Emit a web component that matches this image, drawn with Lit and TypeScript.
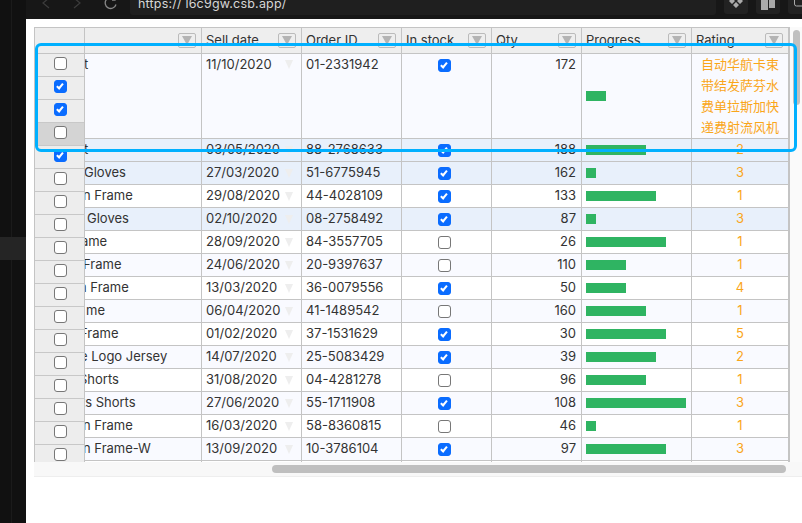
import { LitElement, html, css } from "lit";
import { customElement } from "lit/decorators.js";

interface Row { name: string; x: number; date: string; id: string; stock: boolean; qty: number; bar: number; rate: string; bg: string; tall?: boolean }
const W = "w", T = "t", B = "b";
const raw: [string, number, string, string, boolean, number, number, string, string][] = [
  ["t", 49, "11/10/2020", "01-2331942", true, 172, 20, "自动华航卡束带结发萨芬水费单拉斯加快递费射流风机", T],
  ["t", 49, "03/05/2020", "88-2768633", true, 188, 60, "2", B],
  ["Gloves", 49, "27/03/2020", "51-6775945", true, 162, 10, "3", B],
  ["n Frame", 48, "29/08/2020", "44-4028109", true, 133, 70, "1", W],
  ["Gloves", 52, "02/10/2020", "08-2758492", true, 87, 10, "3", B],
  ["rame", 41, "28/09/2020", "84-3557705", false, 26, 80, "1", W],
  ["Frame", 48, "24/06/2020", "20-9397637", false, 110, 40, "1", T],
  ["n Frame", 44, "13/03/2020", "36-0079556", true, 50, 40, "4", W],
  ["me", 51, "06/04/2020", "41-1489542", false, 160, 60, "1", T],
  ["Frame", 45, "01/02/2020", "37-1531629", true, 30, 80, "5", W],
  ["e Logo Jersey", 45, "14/07/2020", "25-5083429", true, 39, 70, "2", T],
  ["Shorts", 44, "31/08/2020", "04-4281278", false, 96, 60, "1", W],
  ["ts Shorts", 46, "27/06/2020", "55-1711908", true, 108, 100, "3", T],
  ["n Frame", 48, "16/03/2020", "58-8360815", false, 46, 10, "1", W],
  ["n Frame-W", 48, "13/09/2020", "10-3786104", true, 97, 80, "3", T],
];
const rows: Row[] = raw.map(([name, x, date, id, stock, qty, bar, rate, bg], i) => ({ name, x, date, id, stock, qty, bar, rate, bg, tall: i === 0 }));
const frozen = Array.from({ length: 18 }, (_, i) => i);
const heads = ["", "Sell date", "Order ID", "In stock", "Qty", "Progress", "Rating"];

@customElement("app-root")
export class AppRoot extends LitElement {
  static styles = css`
    :host { display: flex; width: 802px; height: 523px; overflow: hidden; background: #111; font-family: Inter, "Noto Sans CJK SC", sans-serif; font-size: 13px; color: #333; }
    .rail { width: 26px; flex: none; display: flex; flex-direction: column; background: #111; }
    .rail-line { flex: none; height: 237px; border-right: 1px solid #1b1b1b; width: 11px; }
    .rail-line.rest { flex: 1; }
    .rail-item { flex: none; height: 23px; background: #252525; }
    .main { flex: 1; display: flex; flex-direction: column; min-width: 0; }
    .top { height: 19px; flex: none; display: flex; align-items: flex-start; background: #171717; overflow: hidden; }
    .nav { width: 104px; flex: none; display: flex; align-items: center; gap: 23px; padding: 0 0 0 16px; box-sizing: border-box; margin-top: -6px; height: 18px; }
    .nav svg { flex: none; }
    .url { width: 586px; height: 15px; flex: none; background: #1f1f1f; border-radius: 0 0 3px 3px; color: #d6d6d6; font-size: 12.5px; line-height: 7px; padding-left: 8px; box-sizing: border-box; letter-spacing: 0.2px; white-space: nowrap; overflow: hidden; }
    .tools { display: flex; gap: 8px; padding-left: 8px; }
    .tool { width: 24px; height: 14px; background: #222; border-radius: 0 0 3px 3px; display: flex; justify-content: center; align-items: flex-start; }
    .page { flex: 1; background: #fff; position: relative; padding: 8px 0 0 8px; }
    .area { display: flex; flex-direction: column; width: 768px; }
    .grid { width: 756px; height: 435px; box-sizing: border-box; border: 1px solid #c4c4c4; border-bottom: 0; overflow: hidden; position: relative; }
    .row { display: grid; grid-template-columns: 167px 100px 100px 90px 90px 110px 97px; height: 23px; box-sizing: border-box; border-bottom: 1px solid #c4c4c4; }
    .row.tall { height: 85px; }
    .head { height: 26px; background: #eee; }
    .w { background: #fff; } .t { background: #f9faff; } .b { background: #e8f0fb; }
    .cell { border-right: 1px solid #c4c4c4; padding: 0 5px 0 4px; display: flex; align-items: center; white-space: nowrap; overflow: hidden; height: 22px; box-sizing: border-box; line-height: 20px; }
    .txt { padding-bottom: 2px; }
    .row.tall .cell { height: 84px; align-items: flex-start; line-height: 21px; padding-bottom: 0; }
    .row.head .cell { height: 25px; justify-content: space-between; line-height: 23px; }
    .name { padding-left: 0; }
    .date { justify-content: space-between; }
    .date i { width: 0; height: 0; border: 4px solid transparent; border-top: 9px solid #eee; border-bottom: 0; margin-right: 3px; margin-top: 2px; }
    .row.tall .date i { margin-top: 6px; }
    .stock { justify-content: center; padding: 0 5px 0 0; }
    .stock input { margin-top: 1px; }
    .row.tall .stock { padding-top: 5px; }
    .row.tall .stock input { margin-top: 0; }
    .qty { justify-content: flex-end; }
    .row.tall .prog { align-items: center; }
    .bar { height: 10px; background: #2fb462; }
    .rate { justify-content: center; color: #faa61a; text-align: center; white-space: normal; padding-left: 5px; }
    .row.tall .rate { padding: 0 9px; }
    .fbtn { width: 16px; height: 13px; flex: none; border: 1px solid #bbb; border-radius: 2px; background: #eee; display: flex; justify-content: center; align-items: center; }
    .fbtn b { width: 0; height: 0; border: 5px solid transparent; border-top: 9px solid #b4b4b4; border-bottom: 0; }
    input { appearance: none; -webkit-appearance: none; box-sizing: border-box; margin: 0; width: 13px; height: 13px; flex: none; background: #fff; border: 1px solid #777; border-radius: 3px; position: relative; }
    input:checked { background: #0a6cff; border-color: #0a6cff; }
    input:checked::after { content: ""; position: absolute; left: 3px; top: 0.5px; width: 3.5px; height: 7px; box-sizing: border-box; border: solid #fff; border-width: 0 2px 2px 0; transform: rotate(40deg); }
    .frozen { position: absolute; left: 0; top: 0; width: 49px; height: 100%; background: #ededed; border-right: 1px solid #c4c4c4; }
    .f-head { height: 25px; border-bottom: 1px solid #c4c4c4; }
    .f-row { border-bottom: 1px solid #c8c8c8; display: flex; align-items: flex-start; padding: 3px 0 0 19px; box-sizing: content-box; height: 19px; }
    .f-row.on { background: #d4d4d4; }
    .hbar { height: 15px; width: 768px; background: #f8f8f8; border-bottom: 1px solid #eee; display: flex; align-items: center; justify-content: flex-end; padding-right: 16px; box-sizing: border-box; }
    .hthumb { width: 514px; height: 8px; background: #bfbfbf; border-radius: 4px; }
    .vbar { position: absolute; right: 0; top: 8px; width: 12px; height: 435px; background: #fafafa; }
    .vthumb { position: absolute; left: 3px; top: 3px; width: 7px; height: 75px; background: #c0c0c0; border-radius: 4px; }
    .sel { position: absolute; left: 9px; top: 24px; width: 762px; height: 109px; box-sizing: border-box; border: 3px solid #00b0ff; border-radius: 6px; pointer-events: none; }
  `;

  render() {
    return html`
      <div class="rail">
        <div class="rail-line"></div>
        <div class="rail-item"></div>
        <div class="rail-line rest"></div>
      </div>
      <div class="main">
        <div class="top">
          <div class="nav">
            <svg width="8" height="12" viewBox="0 0 8 12" fill="none" stroke="#3c3c3c" stroke-width="1.2"><path d="M7 1 1 6l6 5"/></svg>
            <svg width="8" height="12" viewBox="0 0 8 12" fill="none" stroke="#3c3c3c" stroke-width="1.2"><path d="M1 1l6 5-6 5"/></svg>
            <svg width="14" height="14" viewBox="0 0 14 14" fill="none" stroke="#888" stroke-width="1.3"><path d="M12 8.5A5.5 5.5 0 1 1 11 3.5M11 1v3H8"/></svg>
          </div>
          <div class="url">https:// l6c9gw.csb.app/</div>
          <div class="tools">
            <div class="tool"><svg width="16" height="10" viewBox="0 0 16 10" fill="#aaa"><path d="M4 -2l3 3-3 3-3-3zM12 -2l3 3-3 3-3-3zM8 2l3 3-3 3-3-3z"/></svg></div>
            <div class="tool"><svg width="16" height="10" viewBox="0 0 16 10" fill="#aaa"><path d="M1 0h7v10H1zM9 0h6v8H9z"/></svg></div>
            <div class="tool"><svg width="16" height="10" viewBox="0 0 16 10" fill="none" stroke="#aaa"><rect x="2.5" y="-3" width="12" height="9" rx="2"/></svg></div>
          </div>
        </div>
        <div class="page">
          <div class="area">
            <div class="grid">
              <div class="row head">
                ${heads.map((h) => html`<div class="cell"><span>${h}</span><span class="fbtn"><b></b></span></div>`)}
              </div>
              ${rows.map((r) => html`
                <div class="row ${r.bg} ${r.tall ? "tall" : ""}">
                  <div class="cell name txt"><span style="padding-left:${r.x}px">${r.name}</span></div>
                  <div class="cell date txt"><span>${r.date}</span><i></i></div>
                  <div class="cell txt">${r.id}</div>
                  <div class="cell stock"><input type="checkbox" .checked=${r.stock} /></div>
                  <div class="cell qty txt">${r.qty}</div>
                  <div class="cell prog"><div class="bar" style="width:${r.bar}px"></div></div>
                  <div class="cell rate txt">${r.rate}</div>
                </div>
              `)}
              <div class="row w">${heads.map(() => html`<div class="cell"></div>`)}</div>
              <div class="frozen">
                <div class="f-head"></div>
                ${frozen.map((i) => html`<div class="f-row ${i === 3 ? "on" : ""}"><input type="checkbox" .checked=${i === 1 || i === 2 || i === 4} /></div>`)}
              </div>
            </div>
            <div class="hbar"><div class="hthumb"></div></div>
          </div>
          <div class="vbar"><div class="vthumb"></div></div>
          <div class="sel"></div>
        </div>
      </div>
    `;
  }
}
